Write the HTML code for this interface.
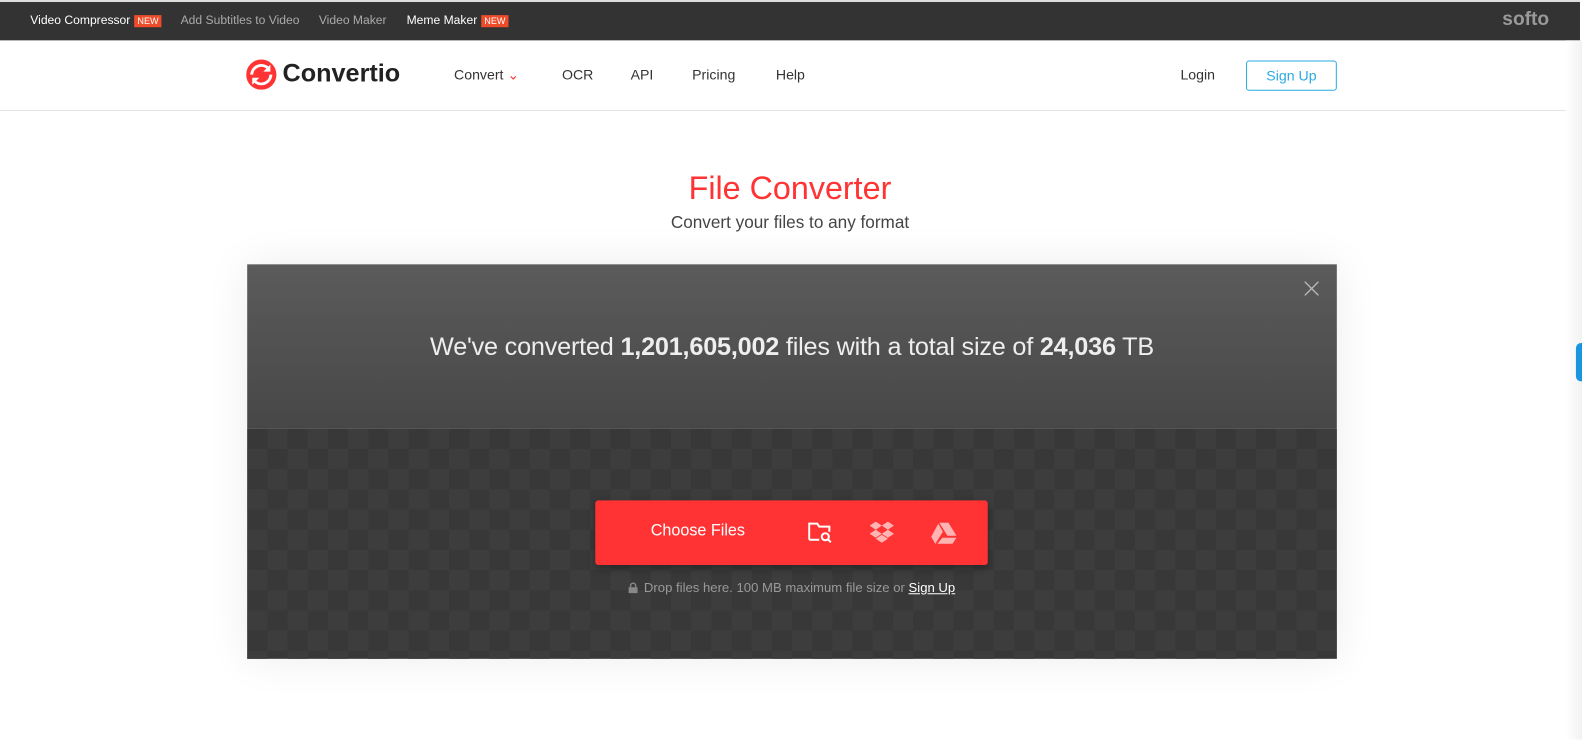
<!DOCTYPE html>
<html><head><meta charset="utf-8"><style>
*{margin:0;padding:0;box-sizing:border-box}
body{width:1582px;height:733px;overflow:hidden;background:#fff;font-family:"Liberation Sans",sans-serif;position:relative}
#w{position:absolute;left:0;top:0;width:1568px;height:727px;transform:scale(1.00893);transform-origin:0 0}
.top{position:absolute;left:0;top:0;width:1566px;height:40px;background:#333;border-top:2px solid #ddd;font-size:12px;color:#fff}
.top span{position:absolute;top:11px}
.new{background:#ee4b2b;color:#fff;font-size:9px;padding:1px 3px;margin-left:4px}
.hdr{position:absolute;left:0;top:40px;width:1566px;height:70px;border-bottom:1px solid #e5e5e5;font-size:14px;color:#333}
.hdr .n{position:absolute;top:26px}
.side{position:absolute;right:0;top:40px;width:16px;height:693px;background:linear-gradient(90deg,#fff,#f2f2f2)}
h1{position:absolute;left:0;width:1566px;top:168px;text-align:center;color:#ff3333;font-weight:normal;font-size:32px}
.sub{position:absolute;width:1566px;top:211px;text-align:center;color:#444;font-size:17px}
.box{position:absolute;left:245px;top:262px;width:1080px;height:391px;box-shadow:0 0 40px rgba(0,0,0,.08)}
.up{height:163px;background:linear-gradient(#5b5b5b,#474747);color:#eee;font-size:25px;text-align:center;padding-top:68px;letter-spacing:-0.2px}
.dn{height:228px;background-color:#383838;background-image:linear-gradient(45deg,#3d3d3d 25%,transparent 25%,transparent 75%,#3d3d3d 75%),linear-gradient(45deg,#3d3d3d 25%,transparent 25%,transparent 75%,#3d3d3d 75%);background-size:40px 40px;background-position:0 0,20px 20px;position:relative}
.btn{position:absolute;left:345px;top:71px;width:389px;height:64px;background:#ff3333;border-radius:3px;box-shadow:0 3px 8px rgba(0,0,0,.3);color:#fff;font-size:16px}
.drop{position:absolute;left:0;width:1080px;top:150px;text-align:center;color:#999;font-size:13px}
</style></head><body><div id="w">
<div class="top">
<span style="left:30px">Video Compressor<b class="new" style="font-weight:normal">NEW</b></span>
<span style="left:179px;color:#aaa">Add Subtitles to Video</span>
<span style="left:316px;color:#aaa">Video Maker</span>
<span style="left:403px">Meme Maker<b class="new" style="font-weight:normal">NEW</b></span>
<span style="left:1489px;top:7px;font-size:19px;font-weight:bold;color:#999">softo</span>
</div>
<div class="hdr">
<svg style="position:absolute;left:244px;top:19px" width="30" height="30" viewBox="0 0 30 30"><circle cx="15" cy="15" r="15" fill="#ff3333"/><path d="M7 15a8 8 0 0 1 13-6l-3 3h7V5l-2 2A11 11 0 0 0 4 15z M23 15a8 8 0 0 1-13 6l3-3H6v7l2-2a11 11 0 0 0 18-8z" fill="#fff"/></svg>
<span style="position:absolute;left:280px;top:19px;font-size:25px;font-weight:bold;color:#222">Convertio</span>
<span class="n" style="left:450px">Convert <span style="color:#ff3333">&#8964;</span></span>
<span class="n" style="left:557px">OCR</span>
<span class="n" style="left:625px">API</span>
<span class="n" style="left:686px">Pricing</span>
<span class="n" style="left:769px">Help</span>
<span class="n" style="left:1170px">Login</span>
<span style="position:absolute;left:1235px;top:20px;width:90px;height:30px;border:1px solid #2aaae2;border-radius:3px;color:#2aaae2;text-align:center;line-height:28px">Sign Up</span>
</div>
<div class="side"></div>
<div style="position:absolute;right:0;top:340px;width:6px;height:38px;background:#1a95e0;border-radius:5px 0 0 5px"></div>
<h1>File Converter</h1>
<div class="sub">Convert your files to any format</div>
<div class="box">
<div class="up">We've converted <b>1,201,605,002</b> files with a total size of <b>24,036</b> TB</div>
<svg style="position:absolute;left:1048px;top:17px" width="14" height="14"><path d="M0 0L14 14M14 0L0 14" stroke="#bbb" stroke-width="1.3"/></svg>
<div class="dn">
<div class="btn">
<span style="position:absolute;left:55px;top:22px">Choose Files</span>
<svg style="position:absolute;left:211px;top:21px" width="25" height="22" viewBox="0 0 25 22"><path d="M1 18V2h8l2 3h10v5M1 18h10" fill="none" stroke="#fff" stroke-width="2"/><circle cx="17" cy="15" r="3.5" fill="none" stroke="#fff" stroke-width="2"/><path d="M19.5 17.5l3 3" stroke="#fff" stroke-width="2"/></svg>
<svg style="position:absolute;left:272px;top:21px" width="25" height="22" viewBox="0 0 25 22"><path d="M6 0l6 4-6 4-6-4zM18 0l6 4-6 4-6-4zM6 8l6 4-6 4-6-4zM18 8l6 4-6 4-6-4zM12 13l6 4-6 4-6-4z" fill="#ffb3b3"/></svg>
<svg style="position:absolute;left:333px;top:22px" width="25" height="21" viewBox="0 0 25 21"><path d="M8 0h9l8 13h-9zM7 1l4.5 8L4 21 0 14zM11 15h14l-4 6H6z" fill="#ffb3b3"/></svg>
</div>
<div class="drop"><svg width="9" height="11" viewBox="0 0 9 11" style="vertical-align:-1px;margin-right:6px"><path d="M2 5V3.5a2.5 2.5 0 0 1 5 0V5" fill="none" stroke="#888" stroke-width="1.4"/><rect x="0" y="5" width="9" height="6" fill="#888"/></svg>Drop files here. 100 MB maximum file size or <u style="color:#fff">Sign Up</u></div>
</div>
</div>
</div></body></html>
